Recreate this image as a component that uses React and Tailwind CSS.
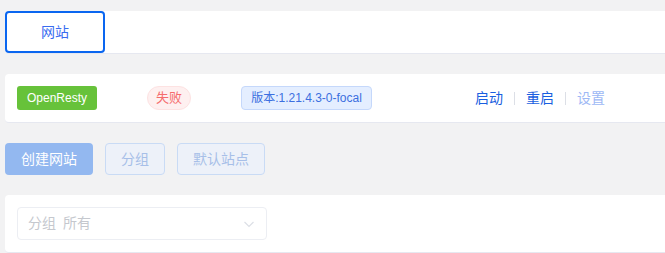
import React from "react";

export default function App() {
  const font = { fontFamily: '"Liberation Sans", "Noto Sans CJK SC", sans-serif' };
  return (
    <div className="w-[665px] h-[253px] bg-[#f2f2f3] overflow-hidden pl-[5px] pt-[11px]" style={font}>
      <div className="h-[43px] bg-white rounded-l-[4px] border-b border-[#e6e8f0] flex">
        <div className="w-[100px] h-[42px] border-2 border-[#0a66f0] rounded-[4px] flex items-center justify-center text-[14px] text-[#3a6cf0]">
          网站
        </div>
      </div>

      <div className="mt-[20px] h-[49px] bg-white rounded-l-[4px] border-b border-[#e6e8f0] flex items-center pl-[12px]">
        <span className="w-[80px] h-[24px] rounded-[3px] bg-[#67c23a] text-white text-[12px] flex items-center justify-center">OpenResty</span>
        <span className="ml-[50px] w-[44px] h-[24px] rounded-full bg-[#fef0f0] border border-[#fde2e2] text-[#f56c6c] text-[13px] flex items-center justify-center">失败</span>
        <span className="ml-[50px] w-[131px] h-[24px] rounded-[4px] bg-[#e4eeff] border border-[#c5d8fb] text-[#3b6fe0] text-[12px] flex items-center justify-center">版本:1.21.4.3-0-focal</span>
        <div className="ml-[103px] flex items-center text-[14px]">
          <span className="text-[#1a5fe0]">启动</span>
          <span className="mx-[11px] w-px h-[13px] bg-[#dcdfe6]"></span>
          <span className="text-[#1a5fe0]">重启</span>
          <span className="mx-[11px] w-px h-[13px] bg-[#dcdfe6]"></span>
          <span className="text-[#9db8f5]">设置</span>
        </div>
      </div>

      <div className="mt-[20px] flex gap-[12px] h-[32px]">
        <span className="w-[88px] rounded-[4px] bg-[#93b8f0] text-white text-[14px] flex items-center justify-center">创建网站</span>
        <span className="w-[60px] rounded-[4px] bg-[#edf1f9] border border-[#c9dbf5] text-[#a7bfe8] text-[14px] flex items-center justify-center">分组</span>
        <span className="w-[88px] rounded-[4px] bg-[#edf1f9] border border-[#c9dbf5] text-[#a7bfe8] text-[14px] flex items-center justify-center">默认站点</span>
      </div>

      <div className="mt-[20px] h-[58px] bg-white rounded-l-[4px] border-b border-[#e6e8f0] pl-[12px] pt-[12px]">
        <div className="w-[250px] h-[33px] border border-[#eceef3] rounded-[4px] flex items-center pl-[10px] pr-[10px] text-[14px] text-[#c5c8ce]">
          <span>分组</span>
          <span className="ml-[7px]">所有</span>
          <svg className="ml-auto" width="14" height="14" viewBox="0 0 14 14" fill="none">
            <path d="M2.5 5l4.5 4.5L11.5 5" stroke="#dcdfe6" strokeWidth="1.2" />
          </svg>
        </div>
      </div>
    </div>
  );
}
